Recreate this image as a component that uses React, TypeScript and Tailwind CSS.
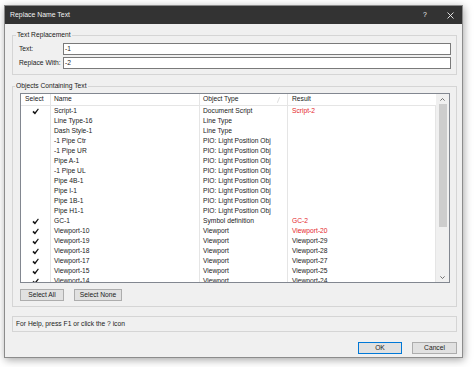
import React from 'react';

type Row = { checked: boolean; name: string; type: string; result: string; red?: boolean };

const PIO = 'PIO: Light Position Obj';

const ROWS: Row[] = [
  { checked: true, name: 'Script-1', type: 'Document Script', result: 'Script-2', red: true },
  { checked: false, name: 'Line Type-16', type: 'Line Type', result: '' },
  { checked: false, name: 'Dash Style-1', type: 'Line Type', result: '' },
  { checked: false, name: '-1 Pipe Ctr', type: PIO, result: '' },
  { checked: false, name: '-1 Pipe UR', type: PIO, result: '' },
  { checked: false, name: 'Pipe A-1', type: PIO, result: '' },
  { checked: false, name: '-1 Pipe UL', type: PIO, result: '' },
  { checked: false, name: 'Pipe 4B-1', type: PIO, result: '' },
  { checked: false, name: 'Pipe I-1', type: PIO, result: '' },
  { checked: false, name: 'Pipe 1B-1', type: PIO, result: '' },
  { checked: false, name: 'Pipe H1-1', type: PIO, result: '' },
  { checked: true, name: 'GC-1', type: 'Symbol definition', result: 'GC-2', red: true },
  { checked: true, name: 'Viewport-10', type: 'Viewport', result: 'Viewport-20', red: true },
  { checked: true, name: 'Viewport-19', type: 'Viewport', result: 'Viewport-29' },
  { checked: true, name: 'Viewport-18', type: 'Viewport', result: 'Viewport-28' },
  { checked: true, name: 'Viewport-17', type: 'Viewport', result: 'Viewport-27' },
  { checked: true, name: 'Viewport-15', type: 'Viewport', result: 'Viewport-25' },
  { checked: true, name: 'Viewport-14', type: 'Viewport', result: 'Viewport-24' },
];

function Check() {
  return (
    <svg width="7" height="7" viewBox="0 0 7 7">
      <path d="M0.4 3.9 L1.8 2.8 L2.9 4.2 L6 0.4 L6.8 1.2 L3 6.6 Z" fill="#111" />
    </svg>
  );
}

function WinButton({ label, width, primary }: { label: string; width: string; primary?: boolean }) {
  return (
    <button
      className={`${width} h-[12px] flex items-center justify-center bg-[#e1e1e1] border leading-none ${
        primary ? 'border-[#0078d7]' : 'border-[#adadad]'
      }`}
    >
      {label}
    </button>
  );
}

export default function App() {
  return (
    <div className="min-h-screen bg-white pl-[4px] pt-[5px] font-['Liberation_Sans',Arial,sans-serif] text-[6.7px] text-[#1a1a1a]">
      <div className="w-[459px] h-[353px] flex flex-col bg-[#f0f0f0] border border-[#8c8c8c] shadow-[1px_2px_8px_rgba(0,0,0,0.35)]">
        {/* title bar */}
        <div className="h-[18px] flex items-center bg-[#333333] text-[#f2f2f2] pl-[5px] pr-[8px] text-[6.9px]">
          <span className="flex-1">Replace Name Text</span>
          <span className="w-[10px] text-center mr-[17px]">?</span>
          <svg width="7" height="7" viewBox="0 0 7 7">
            <path d="M0.5 0.5 L6.5 6.5 M6.5 0.5 L0.5 6.5" stroke="#f2f2f2" strokeWidth="0.9" />
          </svg>
        </div>

        <div className="flex-1 flex flex-col pl-[7px] pr-[5px]">
          {/* Text replacement group */}
          <fieldset className="mt-[7px] border border-[#d5d5d5] pl-[6px] pr-[5px] pt-[4px] pb-[5px]">
            <legend className="-ml-[3px] px-[1px] leading-[8px]">Text Replacement</legend>
            <div className="flex flex-col gap-[2px]">
              <div className="flex items-center">
                <span className="w-[44px]">Text:</span>
                <div className="flex-1 h-[12px] bg-white border border-[#7a7a7a] flex items-center pl-[1px]">-1</div>
              </div>
              <div className="flex items-center">
                <span className="w-[44px]">Replace With:</span>
                <div className="flex-1 h-[12px] bg-white border border-[#7a7a7a] flex items-center pl-[1px]">-2</div>
              </div>
            </div>
          </fieldset>

          {/* Objects group */}
          <fieldset className="mt-[7px] border border-[#d5d5d5] pl-[7px] pr-[6px] pt-[3px] pb-[5px]">
            <legend className="-ml-[5px] px-[1px] leading-[8px]">Objects Containing Text</legend>
            <div className="h-[190px] flex bg-white border border-[#828790] overflow-hidden">
              <div className="flex-1 flex flex-col min-w-0">
                <div className="h-[12px] flex border-b border-[#e5e5e5] shrink-0">
                  <div className="w-[30px] border-r border-[#e5e5e5] pl-[4px] flex items-center">Select</div>
                  <div className="w-[149px] border-r border-[#e5e5e5] pl-[3px] flex items-center">Name</div>
                  <div className="w-[88px] border-r border-[#e5e5e5] pl-[3px] flex items-center relative">
                    Object Type
                    <svg className="absolute right-[7px] top-[3px]" width="3" height="6" viewBox="0 0 3 6">
                      <path d="M0.3 5.8 L2.7 0.2" stroke="#c8c8c8" strokeWidth="0.6" />
                    </svg>
                  </div>
                  <div className="flex-1 pl-[4px] flex items-center">Result</div>
                </div>
                <div className="flex-1 overflow-hidden">
                  {ROWS.map((r) => (
                    <div key={r.name} className="h-[10px] flex leading-[10px]">
                      <div className="w-[30px] border-r border-[#e5e5e5] flex items-center justify-center">
                        {r.checked && <Check />}
                      </div>
                      <div className="w-[149px] border-r border-[#e5e5e5] pl-[3px] whitespace-nowrap">{r.name}</div>
                      <div className="w-[88px] border-r border-[#e5e5e5] pl-[3px] whitespace-nowrap overflow-hidden">
                        {r.type}
                      </div>
                      <div
                        className={`flex-1 border-r border-[#e5e5e5] pl-[4px] whitespace-nowrap ${
                          r.red ? 'text-[#e5262c]' : ''
                        }`}
                      >
                        {r.result}
                      </div>
                    </div>
                  ))}
                </div>
              </div>
              {/* scrollbar */}
              <div className="w-[13px] flex flex-col items-center bg-[#f0f0f0]">
                <div className="h-[10px] flex items-center justify-center">
                  <svg width="5" height="3" viewBox="0 0 5 3">
                    <path d="M0.4 2.6 L2.5 0.5 L4.6 2.6" stroke="#606060" strokeWidth="0.9" fill="none" />
                  </svg>
                </div>
                <div className="w-[8px] h-[123px] bg-[#cdcdcd]" />
                <div className="flex-1" />
                <div className="h-[10px] flex items-center justify-center">
                  <svg width="5" height="3" viewBox="0 0 5 3">
                    <path d="M0.4 0.4 L2.5 2.5 L4.6 0.4" stroke="#606060" strokeWidth="0.9" fill="none" />
                  </svg>
                </div>
              </div>
            </div>
            <div className="mt-[6px] flex gap-[10px]">
              <WinButton label="Select All" width="w-[44px]" />
              <WinButton label="Select None" width="w-[48px]" />
            </div>
          </fieldset>

          {/* status */}
          <div className="mt-[9px] h-[16px] border border-[#d5d5d5] flex items-center pl-[3px]">
            For Help, press F1 or click the ? icon
          </div>

          <div className="mt-[10px] flex justify-end gap-[10px]">
            <WinButton label="OK" width="w-[44px]" primary />
            <WinButton label="Cancel" width="w-[45px]" />
          </div>
        </div>
      </div>
    </div>
  );
}
